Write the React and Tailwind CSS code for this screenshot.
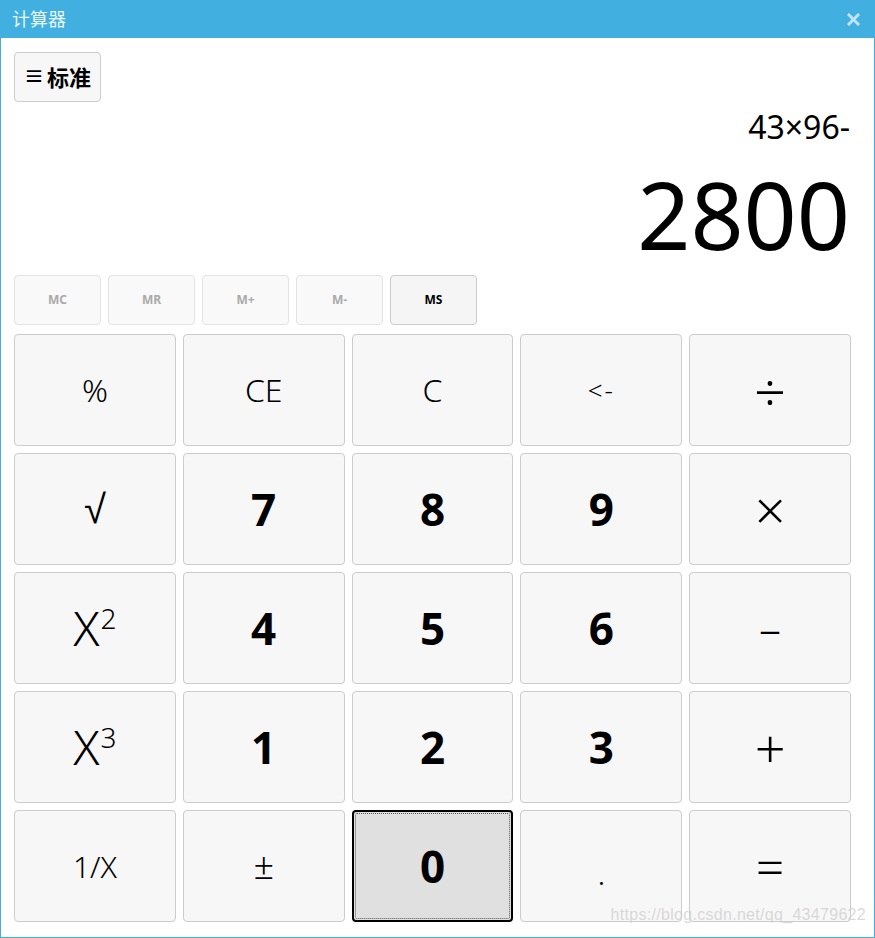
const font = { fontFamily: '"Noto Sans", "Noto Sans CJK SC", sans-serif' };

const keyCls =
  "flex items-center justify-center rounded-[4px] border border-[#cccccc] bg-[#f7f7f7] text-black";

const memory = ["MC", "MR", "M+", "M-", "MS"];

function Key({ children, className = "", style }) {
  return (
    <div className={`${keyCls} ${className}`} style={style}>
      {children}
    </div>
  );
}

export default function App() {
  return (
    <div
      className="relative w-[875px] h-[938px] bg-white border-x border-b border-[#41b0e0] flex flex-col"
      style={font}
    >
      {/* title bar */}
      <div className="h-[38px] -mx-px bg-[#41b0e0] flex items-center justify-between pl-[12px] pr-[15px]">
        <span className="text-[18px] text-[#e8f5fb]">计算器</span>
        <svg width="13" height="13" viewBox="0 0 13 13">
          <path d="M2 2 L11 11 M11 2 L2 11" stroke="#bfe5f6" strokeWidth="3" strokeLinecap="square" />
        </svg>
      </div>

      <div className="flex flex-col pl-[13px] pr-[23px]">
        <div className="mt-[14px] w-[87px] h-[50px] rounded-[4px] border border-[#cccccc] bg-[#f7f7f7] flex items-center justify-center gap-[3px] font-bold text-[22px]">
          <span className="text-[20px] leading-none">≡</span>
          <span>标准</span>
        </div>

        <div className="mt-[8px] text-right text-[32px] leading-[34px] pr-[1px]">43×96-</div>
        <div className="mt-[20px] text-right text-[93px] leading-[100px] pr-[1px]">2800</div>

        <div className="mt-[11px] flex gap-[7px]">
          {memory.map((m) => (
            <div
              key={m}
              className={`w-[87px] h-[50px] rounded-[4px] border flex items-center justify-center text-[12px] font-bold ${
                m === "MS"
                  ? "border-[#cccccc] bg-[#f5f5f5] text-black"
                  : "border-[#e3e3e3] bg-[#f9f9f9] text-[#aaaaaa]"
              }`}
            >
              {m}
            </div>
          ))}
        </div>

        <div className="mt-[9px] grid grid-cols-5 grid-rows-[repeat(5,112px)] gap-x-[7px] gap-y-[7px]">
          <Key className="text-[32px] font-light">%</Key>
          <Key className="text-[32px] font-light">CE</Key>
          <Key className="text-[32px] font-light">C</Key>
          <Key className="text-[26px] font-light tracking-[2px]">&lt;-</Key>
          <Key className="text-[56px] font-light">÷</Key>

          <Key className="text-[40px]" style={{ fontFamily: '"Liberation Sans", Arial, sans-serif' }}>
            √
          </Key>
          <Key className="text-[44px] font-bold">7</Key>
          <Key className="text-[44px] font-bold">8</Key>
          <Key className="text-[44px] font-bold">9</Key>
          <Key className="text-[54px] font-light">×</Key>

          <Key className="text-[48px] font-light">
            <span>X</span>
            <span className="text-[28px] self-start mt-[24px] ml-[1px]">2</span>
          </Key>
          <Key className="text-[44px] font-bold">4</Key>
          <Key className="text-[44px] font-bold">5</Key>
          <Key className="text-[44px] font-bold">6</Key>
          <Key className="text-[44px] font-light">–</Key>

          <Key className="text-[48px] font-light">
            <span>X</span>
            <span className="text-[28px] self-start mt-[24px] ml-[1px]">3</span>
          </Key>
          <Key className="text-[44px] font-bold">1</Key>
          <Key className="text-[44px] font-bold">2</Key>
          <Key className="text-[44px] font-bold">3</Key>
          <Key className="text-[54px] font-light">+</Key>

          <Key className="text-[30px] font-light">1/X</Key>
          <Key className="text-[36px] font-light">±</Key>
          <div className="rounded-[4px] border-2 border-black bg-[#e0e0e0] p-[1px]">
            <div className="w-full h-full border border-dotted border-[#555555] rounded-[2px] flex items-center justify-center text-[44px] font-bold">
              0
            </div>
          </div>
          <Key className="text-[32px] font-light">
            <span className="mt-[14px]">.</span>
          </Key>
          <Key className="text-[50px] font-light">=</Key>
        </div>
      </div>

      <div
        className="absolute right-[8px] bottom-[10px] text-[16px] text-[#d0d0d0]/80 tracking-[0.3px]"
        style={{ fontFamily: '"Liberation Sans", Arial, sans-serif' }}
      >
        https://blog.csdn.net/qq_43479622
      </div>
    </div>
  );
}
